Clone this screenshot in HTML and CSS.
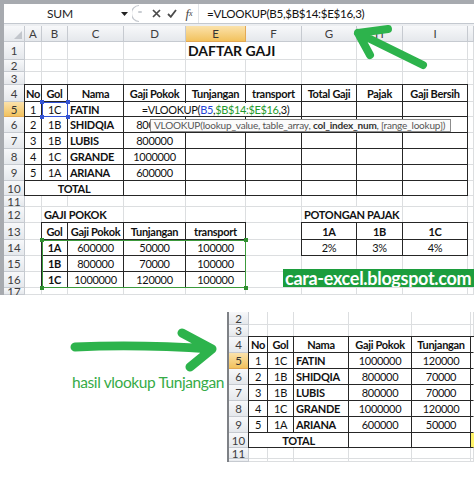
FILE: index.html
```html
<!DOCTYPE html>
<html>
<head>
<meta charset="utf-8">
<link rel="stylesheet" href="styles.css">
</head>
<body>
<div class="win">
  <div class="main">
    <div class="fbar">
      <div class="namebox">SUM</div>
      <div class="dd"><svg width="7" height="4" viewBox="0 0 7 4"><path d="M0 0H7L3.5 4Z" fill="#222"/></svg></div>
      <div class="knob"><svg width="14" height="19" viewBox="0 0 14 19"><path d="M7 1.5A7.5 8 0 0 0 7 17.5" fill="none" stroke="#c3c7cd" stroke-width="1.2"/><rect x="6" y="7" width="4" height="2" rx="1" fill="#c9cdd2"/></svg></div>
      <div class="ic"><svg width="9" height="9" viewBox="0 0 9 9"><path d="M1 1L8 8M8 1L1 8" stroke="#4a4a4a" stroke-width="1.7"/></svg></div>
      <div class="ic"><svg width="10" height="9" viewBox="0 0 10 9"><path d="M1 5L3.8 7.8L9 1" fill="none" stroke="#4a4a4a" stroke-width="1.8"/></svg></div>
      <div class="ic fx"><i>f</i><sub>x</sub></div>
      <div class="finput">=VLOOKUP(B5,$B$14:$E$16,3)</div>
    </div>
    <div class="sheet sh1">
      <div class="ch corner"></div><div class="ch">A</div><div class="ch">B</div><div class="ch">C</div><div class="ch">D</div><div class="ch hl">E</div><div class="ch">F</div><div class="ch">G</div><div class="ch">H</div><div class="ch">I</div><div class="ch"></div>

      <div class="rh">1</div><div></div><div></div><div></div><div></div><div class="s2 title">DAFTAR GAJI</div><div></div><div></div><div></div><div></div>

      <div class="rh">2</div><div></div><div></div><div></div><div></div><div></div><div></div><div></div><div></div><div></div><div></div>

      <div class="rh">3</div><div></div><div></div><div></div><div></div><div></div><div></div><div></div><div></div><div></div><div></div>

      <div class="rh">4</div><div class="k klt b">No</div><div class="k kt b">Gol</div><div class="k kt b">Nama</div><div class="k kt b">Gaji Pokok</div><div class="k kt b">Tunjangan</div><div class="k kt b">transport</div><div class="k kt b">Total Gaji</div><div class="k kt b">Pajak</div><div class="k kt b">Gaji Bersih</div><div></div>

      <div class="rh hl">5</div><div class="k kl">1</div><div class="k">1C</div><div class="k b l">FATIN</div><div class="k"></div><div class="k"><span class="ed">=VLOOKUP(<span class="rb">B5</span>,<span class="rg">$B$14:$E$16</span>,3)</span></div><div class="k"></div><div class="k"></div><div class="k"></div><div class="k"></div><div></div>

      <div class="rh">6</div><div class="k kl">2</div><div class="k">1B</div><div class="k b l">SHIDQIA</div><div class="k">800000</div><div class="k"></div><div class="k"></div><div class="k"></div><div class="k"></div><div class="k"></div><div></div>

      <div class="rh">7</div><div class="k kl">3</div><div class="k">1B</div><div class="k b l">LUBIS</div><div class="k">800000</div><div class="k"></div><div class="k"></div><div class="k"></div><div class="k"></div><div class="k"></div><div></div>

      <div class="rh">8</div><div class="k kl">4</div><div class="k">1C</div><div class="k b l">GRANDE</div><div class="k">1000000</div><div class="k"></div><div class="k"></div><div class="k"></div><div class="k"></div><div class="k"></div><div></div>

      <div class="rh">9</div><div class="k kl">5</div><div class="k">1A</div><div class="k b l">ARIANA</div><div class="k">600000</div><div class="k"></div><div class="k"></div><div class="k"></div><div class="k"></div><div class="k"></div><div></div>

      <div class="rh">10</div><div class="k kl s3 b">TOTAL</div><div class="k"></div><div class="k"></div><div class="k"></div><div class="k"></div><div class="k"></div><div class="k"></div><div></div>

      <div class="rh">11</div><div></div><div></div><div></div><div></div><div></div><div></div><div></div><div></div><div></div><div></div>

      <div class="rh">12</div><div></div><div class="s2 b l">GAJI POKOK</div><div></div><div></div><div></div><div class="s2 b l">POTONGAN PAJAK</div><div></div><div></div>

      <div class="rh">13</div><div></div><div class="k klt b">Gol</div><div class="k kt b">Gaji Pokok</div><div class="k kt b">Tunjangan</div><div class="k kt b">transport</div><div></div><div class="k klt b">1A</div><div class="k kt b">1B</div><div class="k kt b">1C</div><div></div>

      <div class="rh">14</div><div></div><div class="k kl b">1A</div><div class="k">600000</div><div class="k">50000</div><div class="k">100000</div><div></div><div class="k kl">2%</div><div class="k">3%</div><div class="k">4%</div><div></div>

      <div class="rh">15</div><div></div><div class="k kl b">1B</div><div class="k">800000</div><div class="k">70000</div><div class="k">100000</div><div></div><div></div><div></div><div></div><div></div>

      <div class="rh">16</div><div></div><div class="k kl b">1C</div><div class="k">1000000</div><div class="k">120000</div><div class="k">100000</div><div></div><div></div><div></div><div></div><div></div>

      <div class="rh">17</div><div></div><div></div><div></div><div></div><div></div><div></div><div></div><div></div><div></div><div></div>
    </div>
  </div>

  <div class="refsel blue"><i class="h tl"></i><i class="h tr"></i><i class="h bl"></i><i class="h br"></i></div>
  <div class="refsel green"><i class="h tl"></i><i class="h tr"></i><i class="h bl"></i><i class="h br"></i></div>
  <div class="tip">VLOOKUP(lookup_value, table_array, <b>col_index_num</b>, [range_lookup])</div>
  <svg class="arr1" width="474" height="295" viewBox="0 0 474 295"><path d="M423 65L358 33M388 29L358 33L370 55" fill="none" stroke="#2db34c" stroke-width="8" stroke-linecap="round" stroke-linejoin="round"/></svg>
  <div class="wm">cara-excel.blogspot.com</div>
</div>

<div class="lower">
  <div class="note">
    <svg class="arr2" width="150" height="48" viewBox="0 0 150 48"><path d="M7 22Q70 19 144 24M114 8L144 24L122 42" fill="none" stroke="#2db34c" stroke-width="9" stroke-linecap="round" stroke-linejoin="round"/></svg>
    <p class="cap">hasil vlookup Tunjangan</p>
  </div>
  <div class="sheet sh2">
    <div class="rh">2</div><div></div><div></div><div></div><div></div><div></div><div></div>
    <div class="rh">3</div><div></div><div></div><div></div><div></div><div></div><div></div>
    <div class="rh">4</div><div class="k klt b">No</div><div class="k kt b">Gol</div><div class="k kt b">Nama</div><div class="k kt b">Gaji Pokok</div><div class="k kt b">Tunjangan</div><div class="k kt e"></div>
    <div class="rh hl">5</div><div class="k kl">1</div><div class="k">1C</div><div class="k b l">FATIN</div><div class="k">1000000</div><div class="k">120000</div><div class="k e"></div>
    <div class="rh">6</div><div class="k kl">2</div><div class="k">1B</div><div class="k b l">SHIDQIA</div><div class="k">800000</div><div class="k">70000</div><div class="k e"></div>
    <div class="rh">7</div><div class="k kl">3</div><div class="k">1B</div><div class="k b l">LUBIS</div><div class="k">800000</div><div class="k">70000</div><div class="k e"></div>
    <div class="rh">8</div><div class="k kl">4</div><div class="k">1C</div><div class="k b l">GRANDE</div><div class="k">1000000</div><div class="k">120000</div><div class="k e"></div>
    <div class="rh">9</div><div class="k kl">5</div><div class="k">1A</div><div class="k b l">ARIANA</div><div class="k">600000</div><div class="k">50000</div><div class="k e"></div>
    <div class="rh">10</div><div class="k kl s3 b">TOTAL</div><div class="k"></div><div class="k"></div><div class="k e yel"></div>
    <div class="rh">11</div><div></div><div></div><div></div><div></div><div></div><div></div>
    <div class="rh"></div><div></div><div></div><div></div><div></div><div></div><div></div>
  </div>
</div>
</body>
</html>
```
FILE: styles.css
```css
* { box-sizing: border-box; margin: 0; padding: 0; }
html, body { background: #fff; }
body {
  width: 474px;
  height: 504px;
  overflow: hidden;
  font-family: Lato, "Liberation Sans", sans-serif;
  font-size: 11px;
  color: #111;
}

/* ---------- top window ---------- */
.win {
  position: relative;
  height: 295px;
  padding: 4px 0 0 4px;
  background: #a7aaaf;
  overflow: hidden;
}
.main {
  height: 100%;
  display: flex;
  flex-direction: column;
  background: #eceef1;
}
.fbar {
  flex: none;
  height: 20px;
  margin-bottom: 2px;
  display: flex;
  align-items: center;
  background: #fff;
  border-bottom: 1px solid #c3c8cf;
  font-size: 12px;
}
.namebox {
  width: 112px;
  text-align: center;
  color: #222;
  letter-spacing: -0.2px;
}
.dd { width: 16px; display: flex; justify-content: center; }
.knob { width: 16px; display: flex; align-items: center; }
.ic {
  width: 16px;
  display: flex;
  justify-content: center;
  align-items: center;
}
.fx {
  width: 18px;
  font-family: "Liberation Serif", serif;
  font-size: 13px;
  color: #444;
}
.fx sub { font-size: 8px; font-style: italic; vertical-align: -1px; }
.finput {
  flex: 1;
  height: 100%;
  display: flex;
  align-items: center;
  padding-left: 8px;
  border-left: 1px solid #e1e4e8;
  color: #111;
  font-size: 11.6px;
  letter-spacing: -0.3px;
}

/* ---------- sheet grid ---------- */
.sheet { display: grid; background: #fff; }
.sh1 {
  grid-template-columns: 21px 17px 26px 56px 62px 60px 56px 55px 46px 65px 6px;
  grid-template-rows: 16px 18px 12px 13px 17px 15px 16px 16px 16px 16px 15px 11px 16px 17px 16px 16px 16px 7px;
}
.sheet > div {
  min-width: 0;
  display: flex;
  align-items: center;
  justify-content: center;
  white-space: nowrap;
  border-right: 1px solid #dcdee0;
  border-bottom: 1px solid #dcdee0;
  letter-spacing: -0.3px;
}
.sheet > .ch, .sheet > .rh {
  background: linear-gradient(#f7f8fa, #e5e8ec);
  border-color: #c6cad0;
  color: #3d3d3d;
  letter-spacing: 0;
  font-size: 11.5px;
}
.sheet > .hl {
  background: linear-gradient(#fbe2ab, #f2c25e);
  border-color: #e3a955;
  color: #333;
}
.corner { justify-content: flex-end !important; align-items: flex-end !important; padding: 0 2px 2px 0; }
.corner::after {
  content: "";
  width: 0;
  height: 0;
  border-left: 8px solid transparent;
  border-bottom: 8px solid #c2c6cc;
}
.sheet > .k { border-color: #262626; }
.kl { box-shadow: -1px 0 0 #262626; }
.kt { box-shadow: 0 -1px 0 #262626; }
.klt { box-shadow: -1px 0 0 #262626, 0 -1px 0 #262626, -1px -1px 0 #262626; }
.sheet > .e { border-right-color: transparent; }
.sheet > .yel { background: #fff46a; }
.b { font-weight: 700; }
.sheet > .l { justify-content: flex-start; padding-left: 2px; }
.s2 { grid-column: span 2; }
.s3 { grid-column: span 3; }
.sheet > .title {
  justify-content: flex-start;
  padding-left: 2px;
  font-size: 14px;
  font-weight: 700;
  letter-spacing: 0;
}
.ed {
  position: relative;
  z-index: 2;
  background: #fff;
  padding: 0 1px;
  font-size: 11px;
  letter-spacing: -0.35px;
}
.rb { color: #2545d6; }
.rg { color: #1f9a2c; }

/* ---------- overlays ---------- */
.refsel { position: absolute; z-index: 4; }
.refsel.blue { left: 42px; top: 102px; width: 26px; height: 15px; border: 1px solid #3453d4; }
.refsel.green { left: 42px; top: 240px; width: 204px; height: 48px; border: 1px solid #3c9a3c; }
.h { position: absolute; width: 4px; height: 4px; }
.blue .h { background: #3453d4; }
.green .h { background: #2f8f2f; }
.h.tl { left: -3px; top: -3px; }
.h.tr { right: -3px; top: -3px; }
.h.bl { left: -3px; bottom: -3px; }
.h.br { right: -3px; bottom: -3px; }
.tip {
  position: absolute;
  z-index: 5;
  left: 150px;
  top: 119px;
  width: 301px;
  height: 13px;
  padding-left: 3px;
  background: #fbfbfb;
  border: 1px solid #8c8c8c;
  color: #555;
  font-size: 10px;
  line-height: 11px;
  white-space: nowrap;
  letter-spacing: -0.2px;
  overflow: hidden;
}
.tip b { color: #333; }
.arr1 { position: absolute; left: 0; top: 0; z-index: 6; }
.wm {
  position: absolute;
  z-index: 6;
  left: 283px;
  top: 269px;
  width: 191px;
  height: 18px;
  padding-left: 2px;
  background: #1c9d3d;
  color: #fff;
  font-size: 18px;
  font-weight: 700;
  line-height: 18px;
  letter-spacing: -0.3px;
  white-space: nowrap;
  overflow: hidden;
}

/* ---------- lower part ---------- */
.lower { display: flex; height: 209px; }
.note { width: 227px; flex: none; padding: 30px 0 0 68px; }
.arr2 { display: block; }
.cap {
  margin-left: 4px;
  color: #36ab47;
  font-size: 15.5px;
  line-height: 18px;
  letter-spacing: -0.4px;
  white-space: nowrap;
}
.sh2 {
  width: 247px;
  align-self: flex-start;
  margin-top: 17px;
  border-left: 2px solid #7e8186;
  grid-template-columns: 20px 19px 26px 55px 63px 59px 3px;
  grid-template-rows: 13px 12px 16px 16px 16px 16px 16px 16px 15px 11px 3px;
}
```
